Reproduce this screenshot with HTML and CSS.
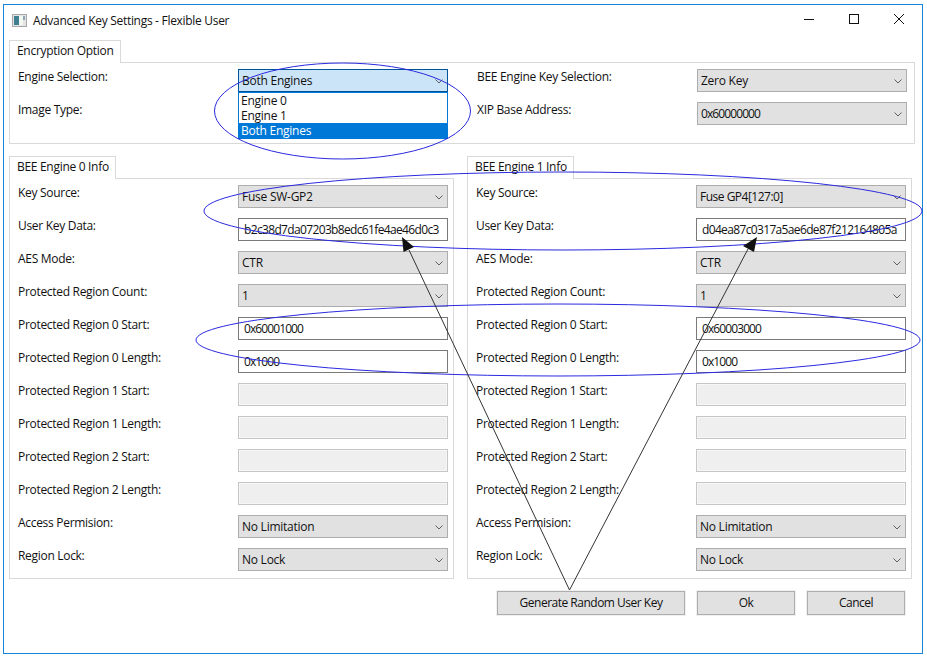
FILE: index.html
```html
<!DOCTYPE html>
<html lang="en">
<head>
<meta charset="utf-8">
<title>Advanced Key Settings - Flexible User</title>
<link rel="stylesheet" href="styles.css">
</head>
<body>
<div class="window">
  <header class="titlebar">
    <svg class="app-icon" width="15" height="13" viewBox="0 0 15 13">
      <rect x="0.5" y="0.5" width="14" height="12" fill="#e4e4e4" stroke="#a8a8a8"/>
      <rect x="2" y="2" width="5" height="9" fill="#3f7f8f"/>
      <rect x="7" y="2" width="4" height="9" fill="#f2f7f2"/>
      <rect x="11" y="2" width="2" height="4" fill="#8fa5b0"/>
    </svg>
    <span class="title">Advanced Key Settings - Flexible User</span>
    <div class="caption">
      <svg width="10" height="10" viewBox="0 0 10 10"><path d="M0 5.5H10" stroke="#111" fill="none"/></svg>
      <svg width="10" height="10" viewBox="0 0 10 10"><rect x="0.5" y="0.5" width="9" height="9" stroke="#111" fill="none"/></svg>
      <svg width="10" height="10" viewBox="0 0 10 10"><path d="M0 0L10 10M10 0L0 10" stroke="#111" fill="none"/></svg>
    </div>
  </header>

  <section class="group group-top">
    <div class="tab">Encryption Option</div>
    <div class="panel panel-top">
      <div class="row">
        <span class="label">Engine Selection:</span>
        <div class="combo combo-open">Both Engines<svg class="chev" width="8" height="5" viewBox="0 0 8 5"><path d="M0.5 0.5L4 4L7.5 0.5" fill="none" stroke="#606060"/></svg>
          <ul class="droplist">
            <li>Engine 0</li>
            <li>Engine 1</li>
            <li class="sel">Both Engines</li>
          </ul>
        </div>
        <span class="label label-second">BEE Engine Key Selection:</span>
        <div class="combo">Zero Key<svg class="chev" width="8" height="5" viewBox="0 0 8 5"><path d="M0.5 0.5L4 4L7.5 0.5" fill="none" stroke="#606060"/></svg></div>
      </div>
      <div class="row">
        <span class="label">Image Type:</span>
        <div class="spacer"></div>
        <span class="label label-second">XIP Base Address:</span>
        <div class="combo num">0x60000000<svg class="chev" width="8" height="5" viewBox="0 0 8 5"><path d="M0.5 0.5L4 4L7.5 0.5" fill="none" stroke="#606060"/></svg></div>
      </div>
    </div>
  </section>

  <div class="engines">
    <section class="group">
      <div class="tab tab-engine">BEE Engine 0 Info</div>
      <div class="panel">
        <div class="row"><span class="label">Key Source:</span><div class="combo">Fuse SW-GP2<svg class="chev" width="8" height="5" viewBox="0 0 8 5"><path d="M0.5 0.5L4 4L7.5 0.5" fill="none" stroke="#606060"/></svg></div></div>
        <div class="row"><span class="label">User Key Data:</span><div class="input input-key">b2c38d7da07203b8edc61fe4ae46d0c3</div></div>
        <div class="row"><span class="label">AES Mode:</span><div class="combo">CTR<svg class="chev" width="8" height="5" viewBox="0 0 8 5"><path d="M0.5 0.5L4 4L7.5 0.5" fill="none" stroke="#606060"/></svg></div></div>
        <div class="row"><span class="label">Protected Region Count:</span><div class="combo">1<svg class="chev" width="8" height="5" viewBox="0 0 8 5"><path d="M0.5 0.5L4 4L7.5 0.5" fill="none" stroke="#606060"/></svg></div></div>
        <div class="row"><span class="label">Protected Region 0 Start:</span><div class="input num">0x60001000</div></div>
        <div class="row"><span class="label">Protected Region 0 Length:</span><div class="input num">0x1000</div></div>
        <div class="row"><span class="label">Protected Region 1 Start:</span><div class="input input-off"></div></div>
        <div class="row"><span class="label">Protected Region 1 Length:</span><div class="input input-off"></div></div>
        <div class="row"><span class="label">Protected Region 2 Start:</span><div class="input input-off"></div></div>
        <div class="row"><span class="label">Protected Region 2 Length:</span><div class="input input-off"></div></div>
        <div class="row"><span class="label">Access Permision:</span><div class="combo">No Limitation<svg class="chev" width="8" height="5" viewBox="0 0 8 5"><path d="M0.5 0.5L4 4L7.5 0.5" fill="none" stroke="#606060"/></svg></div></div>
        <div class="row"><span class="label">Region Lock:</span><div class="combo">No Lock<svg class="chev" width="8" height="5" viewBox="0 0 8 5"><path d="M0.5 0.5L4 4L7.5 0.5" fill="none" stroke="#606060"/></svg></div></div>
      </div>
    </section>
    <section class="group">
      <div class="tab tab-engine">BEE Engine 1 Info</div>
      <div class="panel">
        <div class="row"><span class="label">Key Source:</span><div class="combo combo-tight">Fuse GP4[127:0]<svg class="chev" width="8" height="5" viewBox="0 0 8 5"><path d="M0.5 0.5L4 4L7.5 0.5" fill="none" stroke="#606060"/></svg></div></div>
        <div class="row"><span class="label">User Key Data:</span><div class="input input-key">d04ea87c0317a5ae6de87f212164805a</div></div>
        <div class="row"><span class="label">AES Mode:</span><div class="combo">CTR<svg class="chev" width="8" height="5" viewBox="0 0 8 5"><path d="M0.5 0.5L4 4L7.5 0.5" fill="none" stroke="#606060"/></svg></div></div>
        <div class="row"><span class="label">Protected Region Count:</span><div class="combo">1<svg class="chev" width="8" height="5" viewBox="0 0 8 5"><path d="M0.5 0.5L4 4L7.5 0.5" fill="none" stroke="#606060"/></svg></div></div>
        <div class="row"><span class="label">Protected Region 0 Start:</span><div class="input num">0x60003000</div></div>
        <div class="row"><span class="label">Protected Region 0 Length:</span><div class="input num">0x1000</div></div>
        <div class="row"><span class="label">Protected Region 1 Start:</span><div class="input input-off"></div></div>
        <div class="row"><span class="label">Protected Region 1 Length:</span><div class="input input-off"></div></div>
        <div class="row"><span class="label">Protected Region 2 Start:</span><div class="input input-off"></div></div>
        <div class="row"><span class="label">Protected Region 2 Length:</span><div class="input input-off"></div></div>
        <div class="row"><span class="label">Access Permision:</span><div class="combo">No Limitation<svg class="chev" width="8" height="5" viewBox="0 0 8 5"><path d="M0.5 0.5L4 4L7.5 0.5" fill="none" stroke="#606060"/></svg></div></div>
        <div class="row"><span class="label">Region Lock:</span><div class="combo">No Lock<svg class="chev" width="8" height="5" viewBox="0 0 8 5"><path d="M0.5 0.5L4 4L7.5 0.5" fill="none" stroke="#606060"/></svg></div></div>
      </div>
    </section>
  </div>

  <footer class="actions">
    <button class="btn btn-wide">Generate Random User Key</button>
    <button class="btn">Ok</button>
    <button class="btn">Cancel</button>
  </footer>
</div>

<svg class="notes" width="927" height="657" viewBox="0 0 927 657">
  <g fill="none" stroke="#2a2ae0" stroke-width="1">
    <ellipse cx="342.5" cy="111" rx="128" ry="48"/>
    <ellipse cx="563" cy="211" rx="359" ry="39"/>
    <ellipse cx="558" cy="340" rx="362" ry="36"/>
  </g>
  <g fill="none" stroke="#333" stroke-width="1">
    <path d="M569.5 590L409 250"/>
    <path d="M569.5 590L748 249"/>
  </g>
  <path d="M402 237L414 247L403.5 252Z" fill="#111"/>
  <path d="M757 237L743 246L754 252Z" fill="#111"/>
</svg>
</body>
</html>
```
FILE: styles.css
```css
* { box-sizing: border-box; }
html, body { margin: 0; padding: 0; background: #fff; }
body {
  width: 927px;
  height: 657px;
  padding: 4px 0 0 3px;
  overflow: hidden;
  font-family: "Open Sans", "Noto Sans", sans-serif;
  font-size: 12px;
  color: #111;
}
.window {
  width: 920px;
  height: 650px;
  border: 1px solid #1883d7;
  background: #fff;
  padding: 0 5px;
  display: flex;
  flex-direction: column;
}
.titlebar {
  height: 35px;
  display: flex;
  align-items: center;
  flex: none;
  padding: 0 0 5px 3px;
}
.app-icon { flex: none; }
.title { margin-left: 6px; flex: 1; letter-spacing: -0.3px; }
.caption { display: flex; gap: 35px; margin-right: 13px; margin-bottom: 2px; }
.group { display: flex; flex-direction: column; align-items: flex-start; }
.group-top { width: 906px; margin-bottom: 12px; }
.tab {
  width: 112px;
  height: 23px;
  border: 1px solid #d9d9d9;
  border-bottom: 0;
  padding-left: 7px;
  line-height: 20px;
  background: #fff;
  position: relative;
  z-index: 1;
  margin-bottom: -1px;
  letter-spacing: -0.3px;
}
.tab-engine { width: 107px; }
.panel {
  width: 445px;
  height: 401px;
  border: 1px solid #d9d9d9;
  padding: 6px 5px 0 8px;
  display: flex;
  flex-direction: column;
  gap: 10px;
}
.panel-top { width: 906px; height: 82px; }
.row { display: flex; height: 23px; flex: none; }
.label { width: 220px; flex: none; line-height: 16px; letter-spacing: -0.3px; }
.label-second { margin-left: 29px; }
.spacer { width: 210px; flex: none; }
.combo {
  position: relative;
  width: 210px;
  height: 23px;
  flex: none;
  background: #e1e1e1;
  border: 1px solid #adadad;
  padding-left: 3px;
  line-height: 22px;
  letter-spacing: -0.25px;
}
.combo-tight { letter-spacing: -0.5px; }
.chev { position: absolute; right: 4px; top: 9px; }
.combo-open { background: #cce4f7; border-color: #005499; }
.droplist {
  position: absolute;
  left: -1px;
  top: 22px;
  width: 210px;
  height: 47px;
  margin: 0;
  padding: 0;
  list-style: none;
  background: #fff;
  border: 1px solid #0078d7;
  border-bottom: 0;
  z-index: 2;
}
.droplist li { height: 15px; line-height: 15px; padding-left: 2px; letter-spacing: -0.25px; }
.droplist .sel { background: #0078d7; color: #fff; height: 16px; }
.input {
  width: 210px;
  height: 23px;
  flex: none;
  background: #fff;
  border: 1px solid #7a7a7a;
  padding-left: 5px;
  line-height: 22px;
}
.num { letter-spacing: -0.9px; }
.input-key { white-space: nowrap; overflow: hidden; letter-spacing: -0.65px; }
.input-off {
  background: #efefef;
  border-color: #c6c6c6;
  box-shadow: inset 0 0 0 1px #f7f7f7;
}
.engines { display: flex; gap: 13px; }
.actions {
  display: flex;
  gap: 12px;
  justify-content: flex-end;
  margin-top: 12px;
  padding-right: 12px;
}
.btn {
  width: 98px;
  height: 24px;
  padding: 0 0 2px;
  background: #e1e1e1;
  border: 1px solid #adadad;
  outline: 1px solid #f0f0f0;
  font: inherit;
  color: #111;
  letter-spacing: -0.5px;
}
.btn-wide { width: 188px; }
.notes { position: absolute; left: 0; top: 0; z-index: 3; pointer-events: none; }
```
